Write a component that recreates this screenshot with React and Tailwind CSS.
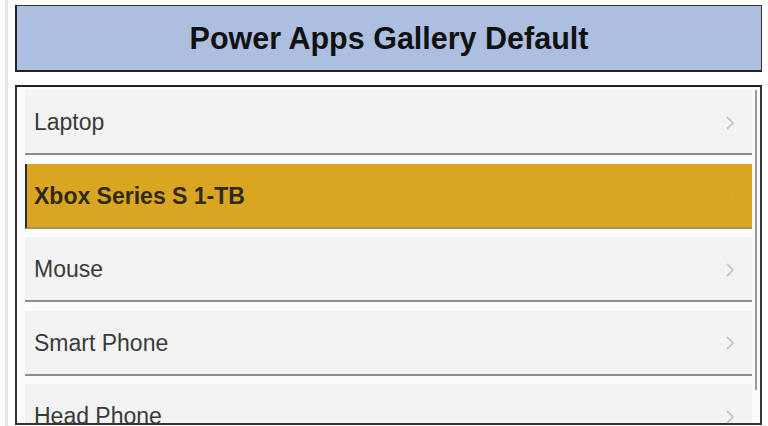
import React from "react";

const items = ["Laptop", "Xbox Series S 1-TB", "Mouse", "Smart Phone", "Head Phone"];

function Chevron({ color }) {
  return (
    <svg width="10" height="16" viewBox="0 0 10 16" className="shrink-0">
      <polyline points="2,2 8,8 2,14" fill="none" stroke={color} strokeWidth="1.8" />
    </svg>
  );
}

export default function App() {
  return (
    <div
      className="w-[768px] h-[426px] bg-white overflow-hidden flex"
      style={{ fontFamily: '"Liberation Sans", Arial, sans-serif' }}
    >
      <div className="ml-[5px] w-[3px] h-full bg-[#e4e4e4]" />
      <div className="ml-[7px] w-[747px] flex flex-col">
        <div className="mt-[5px] h-[67px] bg-[#adbfe1] border border-[#333] border-l-2 border-b-2 border-l-[#222] border-b-[#222] flex items-center justify-center">
          <span className="text-[30.5px] font-bold text-[#111] leading-none">Power Apps Gallery Default</span>
        </div>
        <div className="mt-[13px] h-[340px] border-2 border-[#333] border-t-[#222] bg-[#fbfbfb] flex overflow-hidden">
          <div className="pl-[8px] pt-[3px] w-[735px] flex flex-col shrink-0">
            {items.map((t, i) => {
              const sel = i === 1;
              return (
                <div
                  key={t}
                  className={
                    sel
                      ? "shrink-0 h-[65px] mb-[8.6px] bg-[#daa520] border-l-2 border-l-[#2a2a3a] border-b-2 border-b-[#a8955a] flex items-center justify-between pl-[7px] pr-[17px] pt-[2px]"
                      : "shrink-0 h-[65px] mb-[8.6px] bg-[#f3f3f3] border-b-2 border-b-[#8c8c8c] flex items-center justify-between pl-[9px] pr-[17px] pt-[2px]"
                  }
                >
                  <span
                    className={
                      sel
                        ? "text-[23px] font-bold text-[#2e2a1c] leading-none"
                        : "text-[23px] text-[#3a3a3a] leading-none"
                    }
                  >
                    {t}
                  </span>
                  <Chevron color={sel ? "#d4a83a" : "#c8c8c8"} />
                </div>
              );
            })}
          </div>
          <div className="flex-1 flex justify-center pt-[3px]">
            <div className="w-[2px] h-[300px] bg-[#9a9a9a]" />
          </div>
        </div>
      </div>
    </div>
  );
}
